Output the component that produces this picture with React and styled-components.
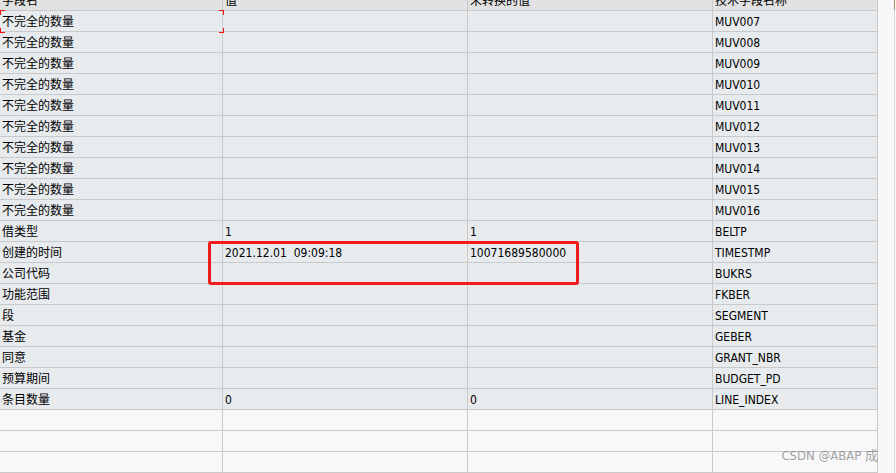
import styled, { createGlobalStyle } from "styled-components";

const GlobalStyle = createGlobalStyle`
  html, body {
    margin: 0;
    padding: 0;
    background: #f7f7f7;
    overflow: hidden;
  }
  body {
    font-family: "DejaVu Sans Condensed", "DejaVu Sans", "Noto Sans CJK SC", sans-serif;
    font-size: 12px;
    color: #000;
  }
`;

const Page = styled.div`
  display: flex;
  width: 896px;
  height: 473px;
  background: #f7f7f7;
`;

const TableWrap = styled.div`
  position: relative;
  width: 878px;
  flex: none;
`;

const Grid = styled.div`
  display: grid;
  grid-template-columns: 223px 245px 245px 165px;
`;

const Cell = styled.div`
  box-sizing: border-box;
  height: ${(p) => (p.$head ? 11 : 21)}px;
  border-right: 1px solid #c9c9c9;
  border-bottom: 1px solid #c9c9c9;
  background: ${(p) => (p.$head ? "#e2e2e2" : p.$empty ? "#f8f8f8" : "#e8ebee")};
  padding-left: 2px;
  padding-top: ${(p) => (p.$head ? 0 : 2)}px;
  display: flex;
  align-items: ${(p) => (p.$head ? "flex-end" : "center")};
  overflow: hidden;
  white-space: pre;
  line-height: ${(p) => (p.$head ? "17px" : "18px")};
`;

const Strip = styled.div`
  flex: 1;
  display: flex;
  justify-content: flex-end;
  padding-right: 1px;
`;

const StripLine = styled.div`
  width: 1px;
  height: 100%;
  background: linear-gradient(#b08a5c 0 10px, #d8d8d8 10px);
`;

const Highlight = styled.div`
  position: absolute;
  left: 208px;
  top: 241px;
  width: 371px;
  height: 44px;
  box-sizing: border-box;
  border: 3px solid #f31c1c;
  border-radius: 3px;
`;

const Corner = styled.span`
  position: absolute;
  width: 4px;
  height: 4px;
  border-color: #e11;
  border-style: solid;
  border-width: 0;
  ${(p) => (p.$top ? "top: 10px; border-top-width: 1px;" : "top: 28px; border-bottom-width: 1px;")}
  ${(p) => (p.$left ? "left: 0; border-left-width: 1px;" : "left: 219px; border-right-width: 1px;")}
`;

const Watermark = styled.div`
  position: absolute;
  right: 0;
  top: 447px;
  font-family: "DejaVu Sans Condensed", "Noto Sans CJK SC", sans-serif;
  font-size: 13px;
  line-height: 18px;
  color: rgba(110, 110, 110, 0.65);
  white-space: nowrap;
`;

const rows = [
  ...Array.from({ length: 10 }, (_, i) => ["不完全的数量", "", "", `MUV0${String(7 + i).padStart(2, "0")}`]),
  ["借类型", "1", "1", "BELTP"],
  ["创建的时间", "2021.12.01  09:09:18", "10071689580000", "TIMESTMP"],
  ["公司代码", "", "", "BUKRS"],
  ["功能范围", "", "", "FKBER"],
  ["段", "", "", "SEGMENT"],
  ["基金", "", "", "GEBER"],
  ["同意", "", "", "GRANT_NBR"],
  ["预算期间", "", "", "BUDGET_PD"],
  ["条目数量", "0", "0", "LINE_INDEX"],
];

const headers = ["字段名", "值", "未转换的值", "技术字段名称"];

export default function App() {
  return (
    <>
      <GlobalStyle />
      <Page>
        <TableWrap>
          <Grid>
            {headers.map((h) => (
              <Cell $head key={h}>{h}</Cell>
            ))}
            {rows.map((r, i) =>
              r.map((v, j) => <Cell key={`${i}-${j}`}>{v}</Cell>)
            )}
            {Array.from({ length: 12 }, (_, i) => (
              <Cell $empty key={`e${i}`} />
            ))}
          </Grid>
          <Corner $top $left />
          <Corner $top />
          <Corner $left />
          <Corner />
          <Highlight />
          <Watermark>CSDN @ABAP 成</Watermark>
        </TableWrap>
        <Strip>
          <StripLine />
        </Strip>
      </Page>
    </>
  );
}
